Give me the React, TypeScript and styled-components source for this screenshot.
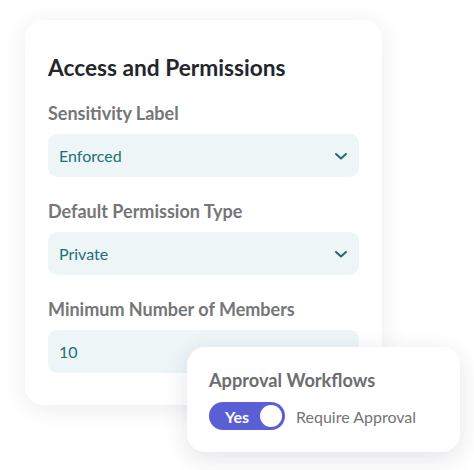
import React from "react";
import styled, { createGlobalStyle } from "styled-components";

const GlobalStyle = createGlobalStyle`
  html, body {
    margin: 0;
    padding: 0;
    background: #ffffff;
    font-family: Lato, "Open Sans", sans-serif;
  }
`;

const Page = styled.div`
  position: relative;
  width: 474px;
  height: 470px;
  padding: 20px 0 0 25px;
  box-sizing: border-box;
`;

const Card = styled.div`
  width: 357px;
  box-sizing: border-box;
  padding: 34px 23px 32px 23px;
  background: #ffffff;
  border-radius: 18px;
  box-shadow: 0 4px 24px rgba(30, 40, 60, 0.09);
  display: flex;
  flex-direction: column;
`;

const Title = styled.h2`
  margin: 0 0 20px 0;
  font-size: 22.7px;
  line-height: 28px;
  font-weight: 700;
  color: #23272c;
`;

const Field = styled.div`
  display: flex;
  flex-direction: column;
  gap: 10px;
  & + & {
    margin-top: 23px;
  }
`;

const Label = styled.div`
  font-size: 18px;
  line-height: 22px;
  font-weight: 700;
  color: #747678;
`;

const Select = styled.div`
  height: 43px;
  border-radius: 9px;
  background: #edf5f7;
  display: flex;
  align-items: center;
  justify-content: space-between;
  padding: 0 11px 0 11px;
  font-size: 16px;
  color: #1c7073;
`;

const Chevron = () => (
  <svg width="14" height="10" viewBox="0 0 14 10" fill="none">
    <path d="M2 3 L7 7.5 L12 3" stroke="#1f6a6e" strokeWidth="2" strokeLinecap="round" strokeLinejoin="round" />
  </svg>
);

const Popup = styled.div`
  position: absolute;
  left: 187px;
  top: 347px;
  width: 273px;
  box-sizing: border-box;
  padding: 23px 22px 22px 22px;
  background: #ffffff;
  border-radius: 18px;
  box-shadow: 0 6px 24px rgba(30, 40, 60, 0.13);
  display: flex;
  flex-direction: column;
  gap: 11px;
`;

const PopupTitle = styled.div`
  font-size: 18.2px;
  line-height: 21px;
  font-weight: 700;
  color: #6b6d70;
`;

const Row = styled.div`
  display: flex;
  align-items: center;
  gap: 11px;
`;

const Toggle = styled.div`
  width: 76px;
  height: 28px;
  border-radius: 14px;
  background: #5a5fd6;
  display: flex;
  align-items: center;
  justify-content: space-between;
  padding: 0 3px 0 16px;
  box-sizing: border-box;
  color: #ffffff;
  font-size: 16px;
  font-weight: 700;
`;

const Knob = styled.div`
  width: 22px;
  height: 22px;
  border-radius: 50%;
  background: #ffffff;
`;

const ToggleText = styled.div`
  font-size: 16px;
  color: #727476;
`;

export default function App() {
  return (
    <>
      <GlobalStyle />
      <Page>
        <Card>
          <Title>Access and Permissions</Title>
          <Field>
            <Label>Sensitivity Label</Label>
            <Select>
              Enforced
              <Chevron />
            </Select>
          </Field>
          <Field>
            <Label>Default Permission Type</Label>
            <Select>
              Private
              <Chevron />
            </Select>
          </Field>
          <Field>
            <Label>Minimum Number of Members</Label>
            <Select>10</Select>
          </Field>
        </Card>
        <Popup>
          <PopupTitle>Approval Workflows</PopupTitle>
          <Row>
            <Toggle>
              Yes
              <Knob />
            </Toggle>
            <ToggleText>Require Approval</ToggleText>
          </Row>
        </Popup>
      </Page>
    </>
  );
}
